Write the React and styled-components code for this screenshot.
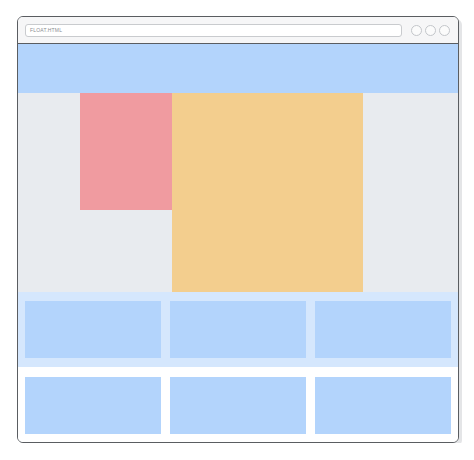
import React from "react"
import styled, { createGlobalStyle } from "styled-components"

const GlobalStyle = createGlobalStyle`
  html, body {
    margin: 0;
    padding: 0;
    background: #fff;
    font-family: "Liberation Sans", Arial, sans-serif;
  }
`

const Page = styled.div`
  padding: 16px 0 0 17px;
`

const Window = styled.div`
  width: 440px;
  border: 1px solid #5a5d61;
  border-radius: 6px;
  overflow: hidden;
  background: #fff;
  box-shadow: 3px 3px 0 #e4e5e7;
`

const Toolbar = styled.div`
  display: flex;
  align-items: center;
  height: 26px;
  padding: 0 7px;
  gap: 9px;
  background: #f6f6f7;
  border-bottom: 1px solid #5a5d61;
`

const Address = styled.div`
  flex: 1;
  height: 11px;
  display: flex;
  align-items: center;
  padding: 0 4px;
  background: #fff;
  border: 1px solid #c9cbce;
  border-radius: 3px;
  font-size: 5px;
  letter-spacing: 0.2px;
  color: #8a8d91;
`

const Dots = styled.div`
  display: flex;
  gap: 3px;
  margin-right: 1px;
`

const Dot = styled.span`
  width: 9px;
  height: 9px;
  border: 1px solid #c3c6ca;
  border-radius: 50%;
  background: #fbfbfb;
`

const Header = styled.div`
  height: 49px;
  background: #b3d4fc;
`

const Main = styled.div`
  display: flex;
  align-items: flex-start;
  height: 199px;
  padding-left: 62px;
  background: #e8ebef;
`

const Box = styled.div`
  width: ${(p) => p.$w}px;
  height: ${(p) => p.$h}px;
  background: ${(p) => p.$color};
`

const Row = styled.div`
  display: grid;
  grid-template-columns: repeat(3, 136px);
  gap: 9px;
  padding: ${(p) => (p.$tinted ? "9px 7px 9px" : "10px 7px 8px")};
  background: ${(p) => (p.$tinted ? "#d5e7fd" : "#fff")};
`

const Card = styled.div`
  height: 57px;
  background: #b3d4fc;
`

export default function App() {
  return (
    <Page>
      <GlobalStyle />
      <Window>
        <Toolbar>
          <Address>FLOAT.HTML</Address>
          <Dots>
            <Dot />
            <Dot />
            <Dot />
          </Dots>
        </Toolbar>
        <Header />
        <Main>
          <Box $w={92} $h={117} $color="#f09ba0" />
          <Box $w={191} $h={199} $color="#f3ce8e" />
        </Main>
        <Row $tinted>
          <Card />
          <Card />
          <Card />
        </Row>
        <Row>
          <Card />
          <Card />
          <Card />
        </Row>
      </Window>
    </Page>
  )
}
